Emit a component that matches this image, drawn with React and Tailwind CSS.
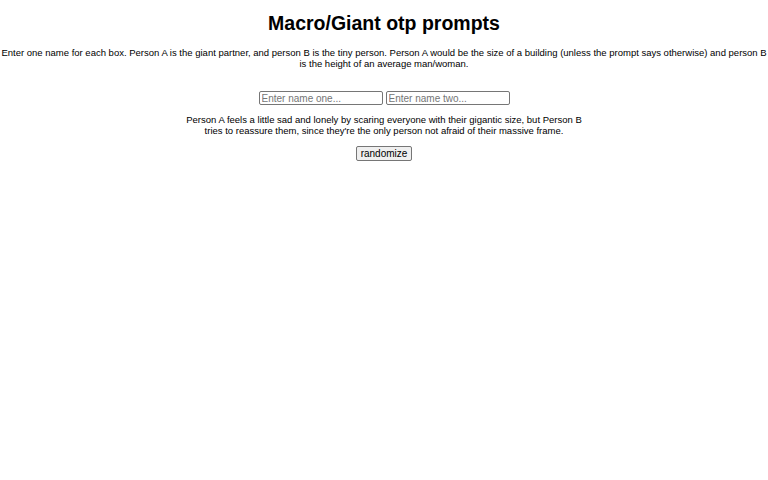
import { useState } from "react";

const prompts = [
  "Person A feels a little sad and lonely by scaring everyone with their gigantic size, but Person B tries to reassure them, since they're the only person not afraid of their massive frame.",
  "Person A accidentally picks up Person B thinking they were a toy, and refuses to put them down.",
  "Person B gets lost in Person A's garden, and Person A has to find them before nightfall.",
];

export default function App() {
  const [nameA, setNameA] = useState("");
  const [nameB, setNameB] = useState("");
  const [idx, setIdx] = useState(0);

  const fill = (text) =>
    text
      .replaceAll("Person A", nameA || "Person A")
      .replaceAll("Person B", nameB || "Person B");

  return (
    <div className="min-h-screen bg-white text-black font-['Liberation_Sans',Arial,sans-serif] text-center">
      <h1 className="pt-[12px] text-[19.5px] font-bold leading-[23px]">Macro/Giant otp prompts</h1>
      <p className="mt-[12px] text-[9.5px] leading-[11px]">
        Enter one name for each box. Person A is the giant partner, and person B is the tiny person. Person A would be the size of a building (unless the prompt says otherwise) and person B is the height of an average man/woman.
      </p>

      <div className="mt-[22px] flex justify-center gap-[3px]">
        <input
          value={nameA}
          onChange={(e) => setNameA(e.target.value)}
          placeholder="Enter name one..."
          className="w-[124px] h-[14px] px-[2px] text-[10px] border border-[#767676] rounded-[2px] placeholder:text-[#757575] outline-none"
        />
        <input
          value={nameB}
          onChange={(e) => setNameB(e.target.value)}
          placeholder="Enter name two..."
          className="w-[124px] h-[14px] px-[2px] text-[10px] border border-[#767676] rounded-[2px] placeholder:text-[#757575] outline-none"
        />
      </div>

      <p className="mx-auto mt-[9px] max-w-[404px] text-[9.5px] leading-[11px]">{fill(prompts[idx])}</p>

      <button
        onClick={() => setIdx((idx + 1) % prompts.length)}
        className="mt-[10px] h-[15px] px-[4px] text-[10px] leading-[12px] bg-[#efefef] border border-[#767676] rounded-[2px]"
      >
        randomize
      </button>
    </div>
  );
}
